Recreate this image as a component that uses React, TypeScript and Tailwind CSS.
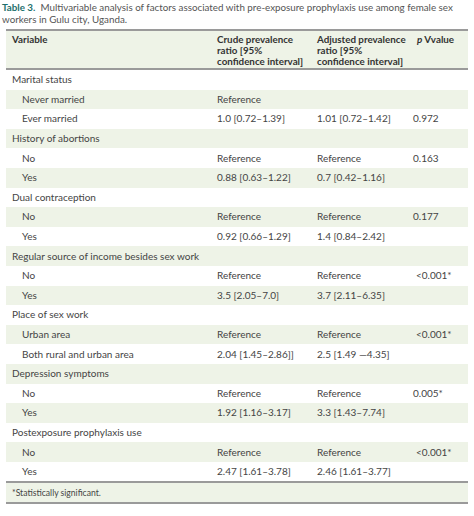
type Row = {
  label: string;
  indent?: boolean;
  crude?: string;
  adjusted?: string;
  p?: string;
};

const rows: Row[] = [
  { label: 'Marital status' },
  { label: 'Never married', indent: true, crude: 'Reference' },
  { label: 'Ever married', indent: true, crude: '1.0 [0.72–1.39]', adjusted: '1.01 [0.72–1.42]', p: '0.972' },
  { label: 'History of abortions' },
  { label: 'No', indent: true, crude: 'Reference', adjusted: 'Reference', p: '0.163' },
  { label: 'Yes', indent: true, crude: '0.88 [0.63–1.22]', adjusted: '0.7 [0.42–1.16]' },
  { label: 'Dual contraception' },
  { label: 'No', indent: true, crude: 'Reference', adjusted: 'Reference', p: '0.177' },
  { label: 'Yes', indent: true, crude: '0.92 [0.66–1.29]', adjusted: '1.4 [0.84–2.42]' },
  { label: 'Regular source of income besides sex work' },
  { label: 'No', indent: true, crude: 'Reference', adjusted: 'Reference', p: '<0.001*' },
  { label: 'Yes', indent: true, crude: '3.5 [2.05–7.0]', adjusted: '3.7 [2.11–6.35]' },
  { label: 'Place of sex work' },
  { label: 'Urban area', indent: true, crude: 'Reference', adjusted: 'Reference', p: '<0.001*' },
  { label: 'Both rural and urban area', indent: true, crude: '2.04 [1.45–2.86]]', adjusted: '2.5 [1.49 —4.35]' },
  { label: 'Depression symptoms' },
  { label: 'No', indent: true, crude: 'Reference', adjusted: 'Reference', p: '0.005*' },
  { label: 'Yes', indent: true, crude: '1.92 [1.16–3.17]', adjusted: '3.3 [1.43–7.74]' },
  { label: 'Postexposure prophylaxis use' },
  { label: 'No', indent: true, crude: 'Reference', adjusted: 'Reference', p: '<0.001*' },
  { label: 'Yes', indent: true, crude: '2.47 [1.61–3.78]', adjusted: '2.46 [1.61–3.77]' },
];

const cols = 'grid grid-cols-[205px_100px_96px_1fr]';

export default function App() {
  return (
    <div className="w-[474px] h-[516px] bg-white text-[#444] font-['Lato',sans-serif] overflow-hidden">
      {/* Caption */}
      <p className="pl-[2px] pr-2 pt-[2px] text-[9.8px] leading-[11.5px] text-[#555]">
        <b className="text-[#1e6f6c]">Table 3.</b>&nbsp; Multivariable analysis of factors associated
        with pre-exposure prophylaxis use among female sex workers in Gulu city, Uganda.
      </p>

      <div className="mx-[6px] mt-[4px] w-[462px]">
        {/* Header */}
        <div className={`${cols} h-[41px] bg-[#eef3e7] border-y-2 border-[#9a9a9a] pt-[3px] text-[9.8px] leading-[11px] font-bold text-[#333] whitespace-nowrap`}>
          <div className="pl-[6px]">Variable</div>
          <div className="pl-[6px]">
            Crude prevalence
            <br />
            ratio [95%
            <br />
            confidence interval]
          </div>
          <div className="pl-[6px]">
            Adjusted prevalence
            <br />
            ratio [95%
            <br />
            confidence interval]
          </div>
          <div className="pl-[10px]">
            <i>p</i> Vvalue
          </div>
        </div>

        {/* Body */}
        {rows.map((r, i) => (
          <div
            key={i}
            className={`${cols} h-[19.6px] items-center text-[10px] ${i % 2 === 1 ? 'bg-[#eef3e7]' : 'bg-white'}`}
          >
            <div className={r.indent ? 'pl-[16px]' : 'pl-[6px]'}>{r.label}</div>
            <div className="pl-[6px]">{r.crude}</div>
            <div className="pl-[6px]">{r.adjusted}</div>
            <div className={r.p?.startsWith('<') ? 'pl-[9px]' : 'pl-[6px]'}>{r.p}</div>
          </div>
        ))}

        {/* Footnote */}
        <div className="h-[23px] flex items-center bg-[#eef3e7] border-y-2 border-[#9a9a9a] pl-[6px] text-[8.6px] text-[#444]">
          *Statistically significant.
        </div>
      </div>
    </div>
  );
}
